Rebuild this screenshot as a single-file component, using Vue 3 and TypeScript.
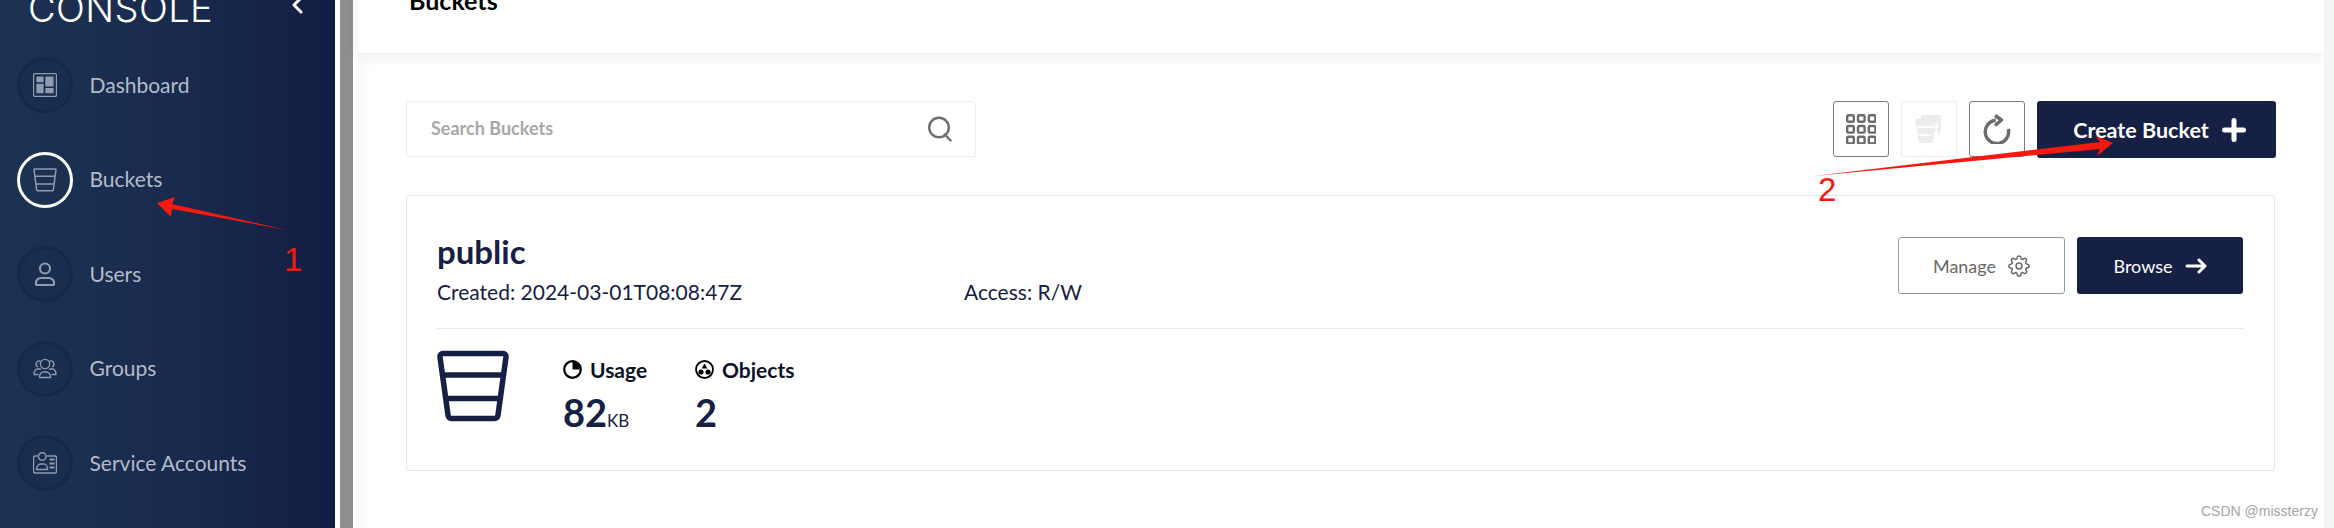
<template>
  <div class="shell">
    <aside class="sidebar">
      <div class="brand">
        <span class="brand-name">CONSOLE</span>
        <svg class="collapse" width="12" height="22" viewBox="0 0 12 22">
          <path d="M10 2 3 9l7 7" fill="none" stroke="#fff" stroke-width="3" stroke-linecap="round" stroke-linejoin="round" />
        </svg>
      </div>
      <nav class="nav">
        <a v-for="item in navItems" :key="item" class="nav-item">
          <span class="nav-circle" :class="{ active: item === 'Buckets' }">
            <svg v-if="item === 'Dashboard'" width="24" height="24" viewBox="0 0 24 24">
              <rect x="0.6" y="0.6" width="22.8" height="22.8" rx="1" fill="none" stroke="#8e9bb0" stroke-width="1.2" />
              <rect x="3.4" y="3.4" width="7.2" height="5.8" rx="0.5" fill="#8e9bb0" />
              <rect x="3.4" y="10.8" width="7.2" height="9.4" rx="0.5" fill="#8e9bb0" />
              <rect x="12.3" y="3.4" width="8.3" height="10" rx="0.5" fill="#8e9bb0" />
              <rect x="12.3" y="15" width="8.3" height="5.2" rx="0.5" fill="#8e9bb0" />
            </svg>
            <svg v-else-if="item === 'Buckets'" width="24" height="24" viewBox="0 0 72 72">
              <path d="M5 3H67a2 2 0 0 1 2 2L61 66a2 2 0 0 1-2 2H13a2 2 0 0 1-2-2L3 5a2 2 0 0 1 2-2ZM6 25H66M9 48H63" fill="none" stroke="#8e9bb0" stroke-width="4.5" stroke-linejoin="round" />
            </svg>
            <svg v-else-if="item === 'Users'" width="24" height="24" viewBox="0 0 24 24" fill="none" stroke="#8e9bb0" stroke-width="2.2">
              <circle cx="12" cy="6.500" r="5" />
              <path d="M4 23h16a1 1 0 0 0 1-1v-1.500c0-2.500-2.500-4.500-5-4.500H8c-2.500 0-5 2-5 4.500V22a1 1 0 0 0 1 1Z" />
            </svg>
            <svg v-else-if="item === 'Groups'" width="24" height="24" viewBox="0 0 24 24" fill="none" stroke="#8e9bb0" stroke-width="1.400">
              <circle cx="12" cy="7" r="4.600" />
              <path d="M6.500 20.500c-.5-3 2-5.500 4-5.500h3c2 0 4.500 2.500 4 5.500Z" />
              <path d="M7.500 4.200a3 3 0 1 0-2.500 5.700M16.500 4.200a3 3 0 1 1 2.500 5.700" />
              <path d="M5.500 17.500H1.200c-.7-2.500 1.300-5.500 3.300-5.500H8M18.500 17.500h4.300c.7-2.500-1.300-5.500-3.300-5.500H16" />
            </svg>
            <svg v-else width="24" height="24" viewBox="0 0 24 24" fill="none" stroke="#8e9bb0" stroke-width="1.400">
              <path d="M4.500 5H2a1.500 1.500 0 0 0-1.500 1.500v14A1.500 1.500 0 0 0 2 22h20a1.500 1.500 0 0 0 1.500-1.500v-14A1.500 1.500 0 0 0 22 5H14" />
              <circle cx="9.200" cy="5.500" r="3.800" />
              <path d="M3.500 18.500c0-3 2-5.500 4-5.500h3.500c2 0 3.500 2.500 3.500 5.500Z" />
              <path d="M16.500 8.500h5M16.500 12.500h5M16.500 16.500h5" stroke-width="2.200" />
            </svg>
          </span>
          <span class="nav-label">{{ item }}</span>
        </a>
      </nav>
    </aside>

    <div class="gutter"><div class="gutter-bar"></div></div>

    <main class="main">
      <header class="page-header">
        <h1>Buckets</h1>
      </header>

      <section class="content">
        <div class="toolbar">
          <div class="search">
            <span class="search-text">Search Buckets</span>
            <svg width="26" height="26" viewBox="0 0 26 26" fill="none" stroke="#6f6f6f" stroke-width="2.400">
              <circle cx="12" cy="11.500" r="9.800" />
              <path d="m18 18.500 5.500 6" stroke-linecap="round" />
            </svg>
          </div>
          <div class="actions">
            <button class="icon-btn">
              <svg width="30" height="30" viewBox="0 0 30 30" fill="none" stroke="#6b6b6b" stroke-width="2.400">
                <rect v-for="cell in gridCells" :key="cell.id" :x="cell.x" :y="cell.y" width="6.600" height="6.600" rx="1.200" />
              </svg>
            </button>
            <button class="icon-btn disabled">
              <svg width="30" height="30" viewBox="0 0 30 30">
                <path d="M7 1h18a2 2 0 0 1 2 2v14l-3 7V7H7Z" fill="#ececec" />
                <path d="M1 5h20l1 1-3 22a1 1 0 0 1-1 1H6a1 1 0 0 1-1-1L1 6Z" fill="#ececec" />
                <path d="M3 13h17M4 21h14" stroke="#fff" stroke-width="1.500" />
                <path d="M21 9h4l-1 7h-3" fill="none" stroke="#ececec" stroke-width="1.500" />
              </svg>
            </button>
            <button class="icon-btn">
              <svg width="28" height="30" viewBox="0 0 28 30" fill="none" stroke="#6b6b6b" stroke-width="3.400">
                <path d="M25.300 15a11.700 11.700 0 1 1-12.500-8.800" />
                <path d="M12 1.500 18.500 6 12 11.500" stroke-linejoin="round" />
              </svg>
            </button>
            <button class="primary-btn create">
              <span>Create Bucket</span>
              <svg width="24" height="24" viewBox="0 0 24 24">
                <path d="M12 2.500v19M2.500 12h19" stroke="#fff" stroke-width="5" stroke-linecap="round" />
              </svg>
            </button>
          </div>
        </div>

        <article class="bucket-card">
          <div class="card-top">
            <div>
              <h2 class="bucket-name">public</h2>
              <div class="meta">
                <span class="meta-created">Created: 2024-03-01T08:08:47Z</span>
                <span>Access: R/W</span>
              </div>
            </div>
            <div class="card-actions">
              <button class="outline-btn">
                <span>Manage</span>
                <svg width="22" height="22" viewBox="0 0 24 24" fill="none" stroke="#6b6b6b" stroke-width="1.700">
                  <circle cx="12" cy="12" r="3.200" />
                  <path d="M19.400 15a1.650 1.650 0 0 0 .33 1.820l.06.06a2 2 0 0 1 0 2.830 2 2 0 0 1-2.830 0l-.06-.06a1.650 1.650 0 0 0-1.820-.33 1.650 1.650 0 0 0-1 1.510V21a2 2 0 0 1-2 2 2 2 0 0 1-2-2v-.09A1.650 1.650 0 0 0 9 19.400a1.650 1.650 0 0 0-1.820.33l-.06.06a2 2 0 0 1-2.830 0 2 2 0 0 1 0-2.830l.06-.06a1.650 1.650 0 0 0 .33-1.820 1.650 1.650 0 0 0-1.510-1H3a2 2 0 0 1-2-2 2 2 0 0 1 2-2h.09A1.650 1.650 0 0 0 4.600 9a1.650 1.650 0 0 0-.33-1.820l-.06-.06a2 2 0 0 1 0-2.830 2 2 0 0 1 2.830 0l.06.06a1.650 1.650 0 0 0 1.820.33H9a1.650 1.650 0 0 0 1-1.510V3a2 2 0 0 1 2-2 2 2 0 0 1 2 2v.09a1.650 1.650 0 0 0 1 1.510 1.650 1.650 0 0 0 1.820-.33l.06-.06a2 2 0 0 1 2.830 0 2 2 0 0 1 0 2.830l-.06.06a1.650 1.650 0 0 0-.33 1.820V9a1.650 1.650 0 0 0 1.510 1H21a2 2 0 0 1 2 2 2 2 0 0 1-2 2h-.09a1.650 1.650 0 0 0-1.510 1Z" />
                </svg>
              </button>
              <button class="primary-btn browse">
                <span>Browse</span>
                <svg width="22" height="16" viewBox="0 0 22 16" fill="none" stroke="#fff" stroke-width="3" stroke-linecap="round" stroke-linejoin="round">
                  <path d="M2 8h18M14 2l6 6-6 6" />
                </svg>
              </button>
            </div>
          </div>

          <div class="card-stats">
            <svg class="bucket-big" width="72" height="72" viewBox="0 0 72 72">
              <path d="M6 3.500H66a3 3 0 0 1 3 3.500L61 65a3.500 3.500 0 0 1-3.500 3.500H14.500A3.500 3.500 0 0 1 11 65L3 7a3 3 0 0 1 3-3.500ZM6 25H66M9 48.500H63" fill="none" stroke="#152044" stroke-width="5.500" stroke-linejoin="round" />
            </svg>
            <div class="stat stat-usage">
              <div class="stat-label">
                <svg width="19" height="19" viewBox="0 0 19 19">
                  <circle cx="9.500" cy="9.500" r="8.300" fill="none" stroke="#000" stroke-width="2.200" />
                  <path d="M9.500 9.500V1.500a8 8 0 0 1 8 8Z" fill="#000" />
                </svg>
                <span>Usage</span>
              </div>
              <div class="stat-value">82<small>KB</small></div>
            </div>
            <div class="stat">
              <div class="stat-label">
                <svg width="19" height="19" viewBox="0 0 19 19">
                  <circle cx="9.500" cy="9.500" r="8.500" fill="none" stroke="#000" stroke-width="1.800" />
                  <path d="M9.500 3.500 12.400 8.500H6.600Z" fill="#000" />
                  <circle cx="6" cy="12" r="2.600" fill="#000" />
                  <circle cx="13" cy="12" r="2.600" fill="#000" />
                </svg>
                <span>Objects</span>
              </div>
              <div class="stat-value">2</div>
            </div>
          </div>
        </article>
      </section>
    </main>

    <div class="edge-strip"></div>

    <svg class="arrows" width="2334" height="528" viewBox="0 0 2334 528">
      <polygon points="157,203 175,197 172,204 287,230 172,209 171,217" fill="#f5190f" />
      <polygon points="2113,143 2096,136 2100,142 1814,176 2100,149 2097,156" fill="#f5190f" />
    </svg>
    <span class="mark mark-one">1</span>
    <span class="mark mark-two">2</span>
    <span class="watermark">CSDN @missterzy</span>
  </div>
</template>

<script setup lang="ts">
const navItems: string[] = ['Dashboard', 'Buckets', 'Users', 'Groups', 'Service Accounts'];

const gridCells = Array.from({ length: 9 }, (_, i) => ({
  id: i,
  x: 1.2 + (i % 3) * 10.8,
  y: 1.2 + Math.floor(i / 3) * 10.8,
}));
</script>

<style>
html,
body {
  margin: 0;
  height: 528px;
  overflow: hidden;
  background: #fff;
}
</style>

<style scoped>
/* the screenshot is scrolled, the top 40px of the page sit above the viewport */
.shell {
  display: flex;
  width: 2334px;
  height: 568px;
  margin-top: -40px;
  font-family: Lato, "Liberation Sans", sans-serif;
  color: #152044;
  overflow: hidden;
}

.sidebar {
  width: 335px;
  flex-shrink: 0;
  background: linear-gradient(90deg, #1d3353 0%, #182a4d 55%, #131d44 100%);
}

.brand {
  height: 77.75px;
  box-sizing: border-box;
  padding-left: 28px;
  display: flex;
  justify-content: space-between;
  align-items: flex-start;
}

.brand-name {
  margin-top: 25px;
  font-family: Inter, Lato, sans-serif;
  font-size: 38px;
  line-height: 46px;
  font-weight: 300;
  letter-spacing: 0.4px;
  color: #fff;
}

.collapse {
  margin: 36px 32px 0 0;
}

.nav {
  display: flex;
  flex-direction: column;
  padding-left: 17px;
}

.nav-item {
  height: 94.5px;
  display: flex;
  align-items: center;
  gap: 16.5px;
}

.nav-circle {
  width: 56px;
  height: 56px;
  box-sizing: border-box;
  border-radius: 50%;
  border: 3px solid #152848;
  background: #192d4f;
  display: flex;
  align-items: center;
  justify-content: center;
}

.nav-circle.active {
  border-color: #fff;
  background: transparent;
}

.nav-label {
  padding-bottom: 2px;
  font-size: 21px;
  color: #b3bbc9;
}

.gutter {
  width: 23px;
  flex-shrink: 0;
  box-sizing: border-box;
  padding: 0 5px;
  background: #fff;
}

.gutter-bar {
  height: 100%;
  background: #8e8e8e;
}

.main {
  flex: 1;
  min-width: 0;
  display: flex;
  flex-direction: column;
  background: #fff;
  box-shadow: inset 16px 0 14px -12px #f7f7f7;
}

.page-header {
  height: 93px;
  flex-shrink: 0;
  box-sizing: border-box;
  padding: 25px 0 0 51px;
  background: #fff;
  box-shadow: 0 4px 12px rgba(0, 0, 0, 0.07);
}

.page-header h1 {
  margin: 0;
  font-size: 25px;
  line-height: 30px;
  font-weight: 700;
  color: #000;
}

.content {
  padding: 48px 48px 0 48px;
}

.toolbar {
  display: flex;
  justify-content: space-between;
  align-items: flex-start;
}

.search {
  width: 570px;
  height: 56px;
  box-sizing: border-box;
  padding: 0 22px 0 24px;
  display: flex;
  justify-content: space-between;
  align-items: center;
  border: 1px solid #ededed;
  border-radius: 3px;
}

.search-text {
  padding-bottom: 2px;
  font-size: 18px;
  font-weight: 700;
  color: #a8a8a8;
}

.actions {
  display: flex;
  gap: 12px;
}

button {
  font-family: inherit;
  padding: 0;
  cursor: pointer;
  box-sizing: border-box;
  display: flex;
  align-items: center;
  justify-content: center;
}

.icon-btn {
  width: 56px;
  height: 56px;
  background: #fff;
  border: 1px solid #7a7a7a;
  border-radius: 3px;
}

.icon-btn.disabled {
  border-color: #ececec;
}

.primary-btn {
  background: #152044;
  color: #fff;
  border: none;
  border-radius: 3px;
}

.create {
  width: 239px;
  height: 57px;
  padding-left: 6px;
  gap: 13px;
  font-size: 21.500px;
  font-weight: 700;
}

.bucket-card {
  margin-top: 37px;
  box-sizing: border-box;
  height: 276px;
  padding: 31px 30px 0;
  margin-right: 1px;
  border: 1px solid #e5e5e5;
  border-radius: 3px;
}

.card-top {
  display: flex;
  justify-content: space-between;
  align-items: flex-start;
  padding-bottom: 20px;
  border-bottom: 1px solid #eaeaea;
}

.bucket-name {
  margin: 0;
  font-size: 33px;
  line-height: 48px;
  font-weight: 700;
}

.meta {
  display: flex;
  margin-top: 1px;
  font-size: 21px;
  line-height: 32px;
}

.meta-created {
  width: 527px;
}

.card-actions {
  display: flex;
  gap: 12px;
  margin-top: 10px;
  padding-right: 1px;
}

.outline-btn {
  width: 167px;
  height: 57px;
  gap: 12px;
  background: #fff;
  border: 1px solid #9397ab;
  border-radius: 3px;
  font-size: 18px;
  color: #696969;
}

.browse {
  width: 166px;
  height: 57px;
  gap: 12px;
  font-size: 18px;
}

.card-stats {
  display: flex;
  align-items: flex-start;
  padding-top: 21px;
}

.bucket-big {
  margin-right: 54px;
}

.stat {
  margin-top: 5px;
}

.stat-usage {
  width: 132px;
}

.stat-label {
  height: 28px;
  display: flex;
  align-items: center;
  gap: 8px;
  font-size: 21px;
  font-weight: 700;
  color: #0b1228;
}

.stat-value {
  margin-top: 5px;
  font-size: 38px;
  line-height: 48px;
  font-weight: 700;
}

.stat-value small {
  font-size: 17px;
  font-weight: 400;
}

.edge-strip {
  width: 10px;
  flex-shrink: 0;
  background: #f5f5f5;
}

.arrows {
  position: absolute;
  top: 0;
  left: 0;
  pointer-events: none;
}

.mark {
  position: absolute;
  font-family: "Liberation Sans", sans-serif;
  font-size: 33px;
  line-height: 33px;
  color: #f5190f;
}

.mark-one {
  left: 284px;
  top: 243px;
}

.mark-two {
  left: 1818px;
  top: 173px;
}

.watermark {
  position: absolute;
  left: 2201px;
  top: 503px;
  font-family: "Liberation Sans", sans-serif;
  font-size: 14px;
  line-height: 16px;
  color: #a5a5a5;
}
</style>
